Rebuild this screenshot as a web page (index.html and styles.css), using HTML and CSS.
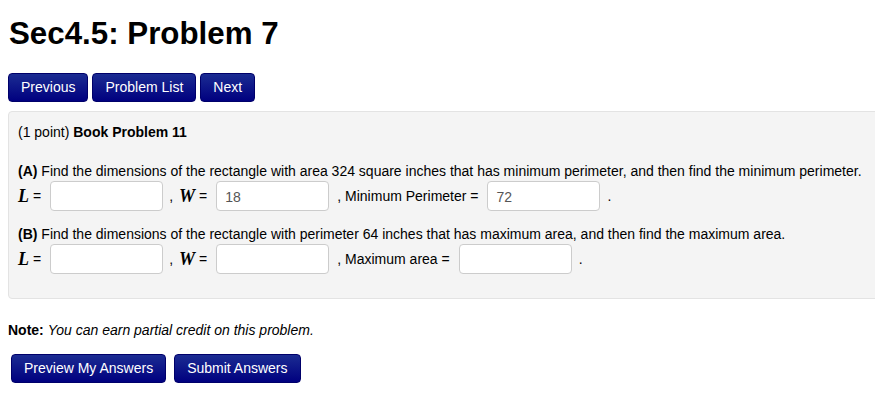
FILE: index.html
```html
<!DOCTYPE html>
<html>
<head>
<meta charset="utf-8">
<link rel="stylesheet" href="styles.css">
</head>
<body>
<div class="page">
  <h1 class="title">Sec4.5: Problem 7</h1>
  <div class="nav">
    <button class="btn">Previous</button>
    <button class="btn">Problem List</button>
    <button class="btn">Next</button>
  </div>
  <div class="well">
    <div class="points">(1 point) <b>Book Problem 11</b></div>
    <div class="part part-a">
      <div class="q"><b>(A)</b> Find the dimensions of the rectangle with area 324 square inches that has minimum perimeter, and then find the minimum perimeter.</div>
      <div class="answers">
        <span class="var">L</span><span class="eq">=</span>
        <span class="field"></span>
        <span class="comma">,</span><span class="var var-w">W</span><span class="eq">=</span>
        <span class="field">18</span>
        <span class="sep">, Minimum Perimeter =</span>
        <span class="field">72</span>
        <span class="dot">.</span>
      </div>
    </div>
    <div class="part part-b">
      <div class="q"><b>(B)</b> Find the dimensions of the rectangle with perimeter 64 inches that has maximum area, and then find the maximum area.</div>
      <div class="answers">
        <span class="var">L</span><span class="eq">=</span>
        <span class="field"></span>
        <span class="comma">,</span><span class="var var-w">W</span><span class="eq">=</span>
        <span class="field"></span>
        <span class="sep">, Maximum area =</span>
        <span class="field"></span>
        <span class="dot">.</span>
      </div>
    </div>
  </div>
  <p class="note"><b>Note:</b> <i>You can earn partial credit on this problem.</i></p>
  <div class="submit">
    <button class="btn btn-lg">Preview My Answers</button>
    <button class="btn btn-lg">Submit Answers</button>
  </div>
</div>
</body>
</html>
```

FILE: styles.css
```css
html, body {
  margin: 0;
  padding: 0;
  background: #fff;
  overflow: hidden;
}
body {
  font-family: "Liberation Sans", Arial, sans-serif;
  color: #000;
}
.page {
  padding: 0 0 0 8px;
  width: 900px;
}
.title {
  margin: 0;
  padding-top: 15px;
  font-size: 31.3px;
  font-weight: bold;
  line-height: 38px;
  padding-left: 1px;
}
.nav {
  display: flex;
  gap: 4px;
  margin-top: 20px;
}
.btn {
  font-family: "Liberation Sans", Arial, sans-serif;
  font-size: 14px;
  color: #fff;
  background: linear-gradient(#1b2c92, #00007f);
  border: 1px solid #00006a;
  border-radius: 4px;
  height: 29px;
  padding: 0 12px;
  line-height: 27px;
  cursor: pointer;
}
.well {
  margin-top: 9px;
  background: #f4f4f4;
  border: 1px solid #e3e3e3;
  border-radius: 4px;
  padding: 10px 9px 22px;
  font-size: 14px;
  height: 154px;
}
.points {
  line-height: 20px;
}
.part-a {
  margin-top: 20px;
}
.part-b {
  margin-top: 14px;
}
.q {
  line-height: 19px;
}
.answers {
  display: flex;
  align-items: center;
  height: 30px;
}
.var {
  font-family: "Liberation Serif", "Times New Roman", serif;
  font-style: italic;
  font-weight: bold;
  font-size: 18px;
  margin-right: 4px;
}
.var-w {
  margin-right: 4px;
}
.eq {
  margin-right: 9px;
}
.field {
  box-sizing: border-box;
  width: 113px;
  height: 30px;
  background: #fff;
  border: 1px solid #cccccc;
  border-radius: 4px;
  color: #555;
  padding: 0 8px;
  line-height: 30px;
  font-size: 14px;
}
.comma {
  margin: 0 6px 0 6px;
}
.sep {
  margin: 0 9px 0 8px;
}
.dot {
  margin-left: 7px;
}
.note {
  margin: 22px 0 0 0;
  font-size: 14px;
  line-height: 18px;
}
.submit {
  display: flex;
  gap: 8px;
  margin-top: 15px;
  padding-left: 3px;
}
.btn-lg {
  padding: 0 12px;
}
```
